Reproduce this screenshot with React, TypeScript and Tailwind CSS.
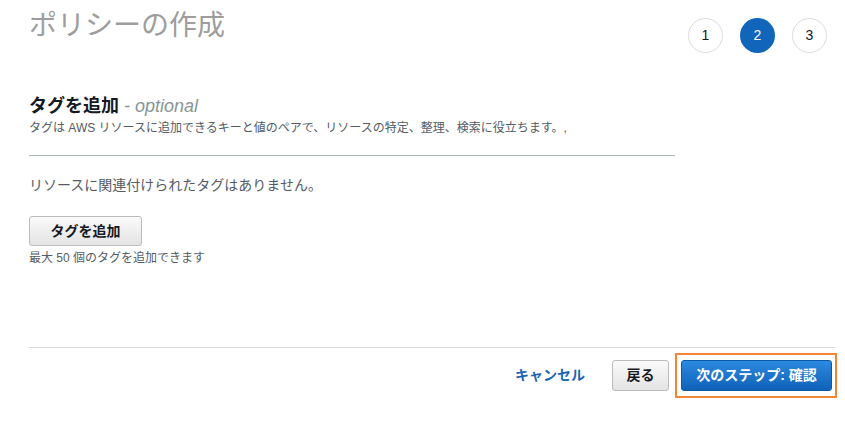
import React from "react";

const font = { fontFamily: '"Liberation Sans", "Noto Sans CJK JP", sans-serif' };

function Steps(): React.ReactElement {
  return (
    <div className="mt-[18px] mr-[10px] flex gap-[17px]">
      <div className="flex h-[35px] w-[35px] items-center justify-center rounded-full border border-[#dddddd] bg-white text-[14px] text-[#16191f]">
        1
      </div>
      <div className="flex h-[35px] w-[35px] items-center justify-center rounded-full bg-[#1166bb] text-[14px] text-white">
        2
      </div>
      <div className="flex h-[35px] w-[35px] items-center justify-center rounded-full border border-[#dddddd] bg-white text-[14px] text-[#16191f]">
        3
      </div>
    </div>
  );
}

export default function App(): React.ReactElement {
  return (
    <div className="h-[423px] w-[845px] overflow-hidden bg-white pl-[29px] pr-[8px]" style={font}>
      <div className="flex items-start justify-between">
        <h1 className="mt-[10px] text-[28px] leading-[32px] font-normal text-[#9d9d9d]">ポリシーの作成</h1>
        <Steps />
      </div>

      <div className="w-[646px]">
        <h2 className="mt-[42px] text-[18px] leading-[22px] font-bold text-[#16191f]">
          タグを追加 <span className="font-normal italic text-[#879596]">- optional</span>
        </h2>
        <p className="mt-[3px] text-[12px] leading-[16px] text-[#545b64]">
          タグは AWS リソースに追加できるキーと値のペアで、リソースの特定、整理、検索に役立ちます。,
        </p>
        <div className="mt-[19px] h-px bg-[#aab7b8]" />

        <p className="mt-[20px] text-[14px] leading-[18px] text-[#545b64]">
          リソースに関連付けられたタグはありません。
        </p>

        <button className="mt-[22px] flex h-[30px] w-[113px] items-center justify-center rounded-[3px] border border-[#bbbbbb] bg-gradient-to-b from-[#fafafa] to-[#e4e4e4] text-[14px] font-bold text-[#16191f]">
          タグを追加
        </button>
        <p className="mt-[4px] text-[12px] leading-[16px] text-[#545b64]">最大 50 個のタグを追加できます</p>
      </div>

      <div className="mt-[81px] mr-[2px] h-px bg-[#d5dbdb]" />

      <div className="mt-[5px] flex items-center justify-end gap-[6px]">
        <a href="#" className="mr-[21px] text-[14px] font-bold text-[#1a66b5]">
          キャンセル
        </a>
        <button className="flex h-[31px] w-[57px] items-center justify-center rounded-[3px] border border-[#bbbbbb] bg-gradient-to-b from-[#fafafa] to-[#e4e4e4] text-[14px] font-bold text-[#16191f]">
          戻る
        </button>
        <div className="border-2 border-[#f58536] py-[5px] pr-[3px] pl-[4px]">
          <button className="flex h-[31px] w-[151px] items-center justify-center rounded-[3px] border border-[#0c5aa6] bg-gradient-to-b from-[#2b8ae0] to-[#0f62b8] text-[14px] font-bold text-white">
            次のステップ: 確認
          </button>
        </div>
      </div>
    </div>
  );
}
